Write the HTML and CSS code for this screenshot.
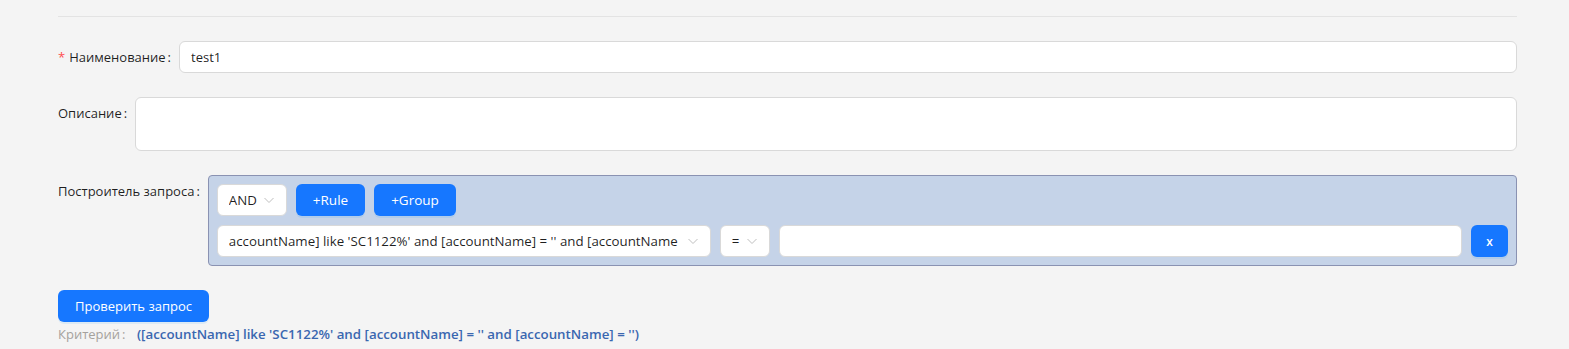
FILE: index.html
```html
<!DOCTYPE html>
<html lang="ru">

<head>
    <meta charset="UTF-8">
    <meta name="viewport" content="width=device-width, initial-scale=1.0">
    <title>Query</title>
    <link rel="stylesheet" href="styles.css">
</head>

<body>
    <div id="page">
        <div class="divider"></div>

        <div class="form-item">
            <label class="label"><span class="required">*</span>Наименование</label>
            <div class="control">
                <input type="text" class="input" value="test1">
            </div>
        </div>

        <div class="form-item">
            <label class="label">Описание</label>
            <div class="control">
                <textarea class="input textarea"></textarea>
            </div>
        </div>

        <div class="form-item">
            <label class="label">Построитель запроса</label>
            <div class="control">
                <!-- query builder group -->
                <div class="builder">
                    <div class="row">
                        <div class="select select-cond">
                            <span class="value">AND</span>
                            <svg class="arrow" viewBox="0 0 12 12"><path d="M1.5 4l4.5 4.5 4.5-4.5" /></svg>
                        </div>
                        <button class="btn">+Rule</button>
                        <button class="btn">+Group</button>
                    </div>
                    <div class="row">
                        <div class="select select-field">
                            <span class="value">accountName] like 'SC1122%' and [accountName] = '' and [accountName</span>
                            <svg class="arrow" viewBox="0 0 12 12"><path d="M1.5 4l4.5 4.5 4.5-4.5" /></svg>
                        </div>
                        <div class="select select-op">
                            <span class="value">=</span>
                            <svg class="arrow" viewBox="0 0 12 12"><path d="M1.5 4l4.5 4.5 4.5-4.5" /></svg>
                        </div>
                        <input type="text" class="input rule-value">
                        <button class="btn btn-remove">x</button>
                    </div>
                </div>
            </div>
        </div>

        <button class="btn btn-check">Проверить запрос</button>
        <div class="criteria">
            <span class="criteria-label">Критерий</span>
            <span class="criteria-text">([accountName] like 'SC1122%' and [accountName] = '' and [accountName] = '')</span>
        </div>
    </div>
</body>

</html>
```

FILE: styles.css
```css
* {
    margin: 0;
    padding: 0;
    box-sizing: border-box;
}

body {
    background-color: #f4f4f4;
    font-family: "Open Sans", "Noto Sans", sans-serif;
    font-size: 14px;
    color: rgba(0, 0, 0, 0.88);
}

#page {
    width: 1459px;
    margin-left: 58px;
    padding-top: 16px;
}

.divider {
    border-top: 1px solid #e3e3e3;
    margin-bottom: 24px;
}

.form-item {
    display: flex;
    align-items: flex-start;
    margin-bottom: 24px;
}

.label {
    height: 32px;
    line-height: 32px;
    white-space: nowrap;
    font-size: 13px;
}

.label::after {
    content: ":";
    margin: 0 8px 0 2px;
}

.required {
    color: #ff4d4f;
    margin-right: 4px;
}

.control {
    flex: 1;
}

.input {
    display: block;
    width: 100%;
    height: 32px;
    padding: 4px 11px;
    border: 1px solid #d9d9d9;
    border-radius: 6px;
    background-color: white;
    font-family: inherit;
    font-size: 13px;
    color: rgba(0, 0, 0, 0.88);
    outline: none;
}

.textarea {
    height: 54px;
    resize: none;
}

.builder {
    background-color: #c5d3e8;
    border: 1px solid #8a92b2;
    border-radius: 4px;
    padding: 8px;
    display: flex;
    flex-direction: column;
    gap: 9px;
}

.row {
    display: flex;
    gap: 9px;
}

.select {
    height: 32px;
    padding: 0 11px;
    background-color: white;
    border: 1px solid #d9d9d9;
    border-radius: 6px;
    display: flex;
    align-items: center;
    font-size: 13.3px;
}

.select .value {
    flex: 1;
    white-space: nowrap;
    overflow: hidden;
}

.arrow {
    flex: none;
    width: 12px;
    height: 12px;
    margin-left: 4px;
    fill: none;
    stroke: #bfbfbf;
    stroke-width: 1;
}

.select-cond {
    width: 70px;
}

.select-field {
    width: 494px;
}

.select-op {
    width: 50px;
}

.rule-value {
    flex: 1;
    width: auto;
}

.btn {
    height: 32px;
    padding: 0 17px;
    border: none;
    border-radius: 6px;
    background-color: #1677ff;
    color: white;
    font-family: inherit;
    font-size: 13.5px;
    cursor: pointer;
    box-shadow: 0 2px 0 rgba(5, 145, 255, 0.1);
}

.btn-remove {
    width: 37px;
    padding: 0;
    font-weight: 600;
    font-size: 12px;
}

.btn-check {
    width: 151px;
    padding: 0;
    font-size: 13px;
}

.criteria {
    margin-top: 2px;
    font-size: 13px;
    line-height: 20px;
}

.criteria-label {
    color: #a5a29d;
}

.criteria-label::after {
    content: ":";
    margin: 0 8px 0 2px;
}

.criteria-text {
    color: #3a67b0;
    font-weight: 600;
    font-size: 13.3px;
}
```
